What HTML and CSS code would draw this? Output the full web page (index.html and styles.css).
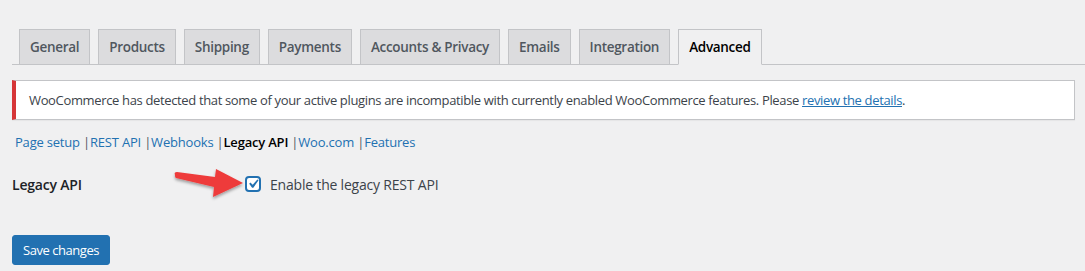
FILE: index.html
```html
<!DOCTYPE html>
<html lang="en">

<head>
  <meta charset="UTF-8">
  <title>WooCommerce Settings - Advanced</title>
  <link rel="stylesheet" href="styles.css">
</head>

<body>

  <div class="wrap">
    <!-- Settings tabs -->
    <nav class="nav-tabs">
      <a href="#" class="nav-tab">General</a>
      <a href="#" class="nav-tab">Products</a>
      <a href="#" class="nav-tab">Shipping</a>
      <a href="#" class="nav-tab">Payments</a>
      <a href="#" class="nav-tab">Accounts &amp; Privacy</a>
      <a href="#" class="nav-tab">Emails</a>
      <a href="#" class="nav-tab">Integration</a>
      <a href="#" class="nav-tab nav-tab-active">Advanced</a>
    </nav>

    <div class="notice notice-error">
      <p>WooCommerce has detected that some of your active plugins are incompatible with currently enabled WooCommerce features. Please <a href="#">review the details</a>.</p>
    </div>

    <ul class="subsubsub">
      <li><a href="#">Page setup</a> |</li>
      <li><a href="#">REST API</a> |</li>
      <li><a href="#">Webhooks</a> |</li>
      <li><a href="#" class="current">Legacy API</a> |</li>
      <li><a href="#">Woo.com</a> |</li>
      <li><a href="#">Features</a></li>
    </ul>

    <div class="form-row">
      <div class="form-label">Legacy API</div>
      <div class="form-field">
        <label class="check-label">
          <span class="checkbox">
            <svg viewBox="0 0 20 20" width="16" height="16">
              <path d="M14.83 4.89l1.34.94-5.81 8.38H9.02L5.78 9.67l1.34-1.25 2.57 2.4z" fill="#2271b1"></path>
            </svg>
          </span>
          Enable the legacy REST API
        </label>
        <!-- Red pointer arrow -->
        <svg class="pointer" viewBox="0 0 80 36" width="80" height="36">
          <defs>
            <filter id="shadow" x="-20%" y="-30%" width="140%" height="180%">
              <feDropShadow dx="0" dy="2" stdDeviation="1.6" flood-color="#000" flood-opacity="0.35"></feDropShadow>
            </filter>
          </defs>
          <path d="M4 9 C3 7 4 6 6 6 L44 11 L45 3 L72 17 L42 31 L43 21 L5 12 C4 11.5 4 10 4 9 Z" fill="#ee3b3b" filter="url(#shadow)"></path>
        </svg>
      </div>
    </div>

    <button class="button-primary">Save changes</button>
  </div>

</body>

</html>
```

FILE: styles.css
```css
/* Admin page base */
body {
  margin: 0;
  padding: 0;
  background: #f0f0f1;
  color: #3c434a;
  font-family: 'Open Sans', sans-serif;
  font-size: 13px;
  overflow: hidden;
}

a {
  color: #2271b1;
}

.wrap {
  padding: 29px 0 0 12px;
}

/* Tabs */
.nav-tabs {
  display: flex;
  border-bottom: 1px solid #c3c4c7;
  padding-left: 7px;
  height: 35px;
}

.nav-tab {
  display: block;
  box-sizing: border-box;
  height: 36px;
  padding: 0 10px;
  margin-right: 8px;
  border: 1px solid #c3c4c7;
  background: #dcdcde;
  color: #50575e;
  font-size: 13.5px;
  font-weight: 600;
  line-height: 34px;
  text-decoration: none;
  letter-spacing: -0.3px;
}

.nav-tab-active {
  background: #f0f0f1;
  border-bottom-color: #f0f0f1;
  color: #000;
}

/* Notice box */
.notice {
  margin: 15px 10px 0 0;
  background: #fff;
  border: 1px solid #c3c4c7;
  border-left: 4px solid #d63638;
  box-shadow: 0 1px 1px rgba(0, 0, 0, 0.04);
  padding: 0 13px;
  height: 38px;
  display: flex;
  align-items: center;
}

.notice p {
  margin: 0;
  letter-spacing: -0.35px;
}

/* Section links */
.subsubsub {
  list-style: none;
  margin: 12px 0 0;
  padding: 0 0 0 3px;
  display: flex;
  color: #50575e;
  font-size: 13px;
  line-height: 20px;
  white-space: pre;
  letter-spacing: -0.2px;
}

.subsubsub a {
  text-decoration: none;
}

.subsubsub a.current {
  color: #000;
  font-weight: 600;
}

/* Form table row */
.form-row {
  display: flex;
  align-items: center;
  margin-top: 15px;
  height: 34px;
}

.form-label {
  width: 233px;
  color: #1d2327;
  font-size: 14px;
  font-weight: 600;
  letter-spacing: -0.2px;
}

.form-field {
  position: relative;
}

.check-label {
  display: flex;
  align-items: center;
  gap: 9px;
  font-size: 14px;
  letter-spacing: -0.2px;
}

.checkbox {
  width: 16px;
  height: 16px;
  box-sizing: border-box;
  border: 2px solid #2271b1;
  border-radius: 4px;
  background: #fff;
  display: flex;
  align-items: center;
  justify-content: center;
}

.checkbox svg {
  width: 18px;
  height: 18px;
  flex: none;
}

.pointer {
  position: absolute;
  left: -74px;
  top: -9px;
}

/* Save button */
.button-primary {
  margin-top: 34px;
  background: #2271b1;
  border: 1px solid #2271b1;
  border-radius: 3px;
  color: #fff;
  font-family: 'Open Sans', sans-serif;
  font-size: 13px;
  height: 30px;
  padding: 0 10px;
  letter-spacing: -0.45px;
}
```
